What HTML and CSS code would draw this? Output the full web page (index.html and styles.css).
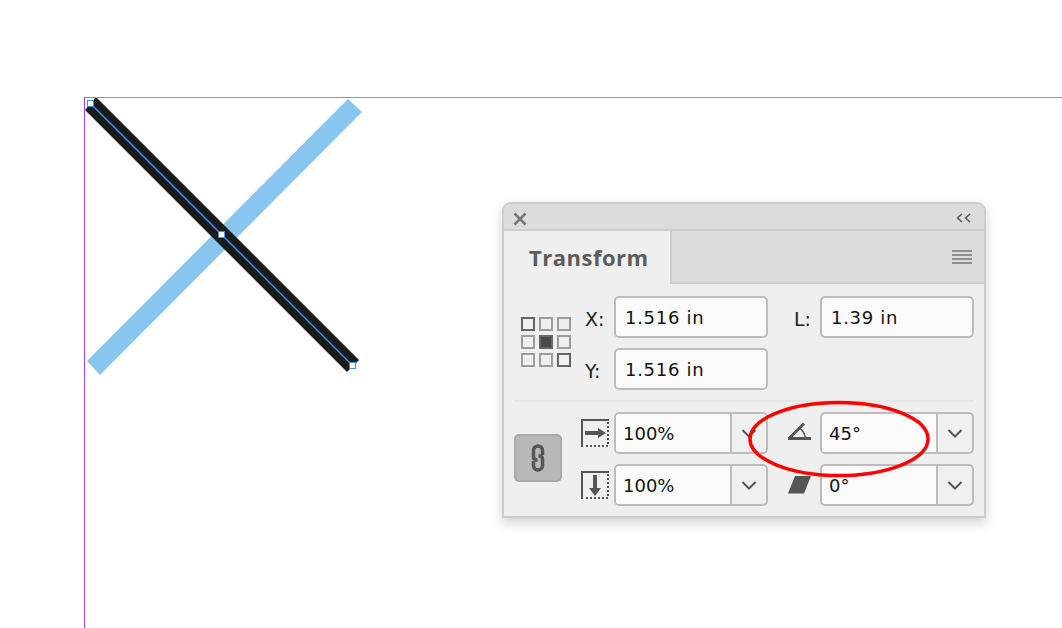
FILE: index.html
```html
<!DOCTYPE html>
<html lang="en">
<head>
  <meta charset="UTF-8">
  <meta name="viewport" content="width=device-width, initial-scale=1.0">
  <title>Transform panel</title>
  <link rel="stylesheet" href="styles.css">
</head>
<body>
  <!-- Page canvas: guides, the two strokes and their handles -->
  <svg class="canvas" width="1062" height="628" viewBox="0 0 1062 628">
    <polygon points="348,99 362,112 100,375 87,361" fill="#88c6f0"/>
    <polygon points="96,97 359,360 347,372 85,110" fill="#1a1a1a"/>
    <line x1="90" y1="103" x2="352" y2="365" stroke="#3f8fef" stroke-width="1.5"/>
    <line x1="84" y1="97.5" x2="1062" y2="97.5" stroke="#c86be8" stroke-width="1"/>
    <line x1="84.5" y1="97" x2="84.5" y2="628" stroke="#a142f4" stroke-width="1"/>
    <rect class="handle" x="87.5" y="100.5" width="6" height="6"/>
    <rect class="handle" x="218.5" y="231.5" width="6" height="6"/>
    <rect class="handle" x="349.5" y="362.5" width="6" height="6"/>
  </svg>

  <div class="panel">
    <div class="titlebar">
      <svg class="close-icon" width="14" height="14" viewBox="0 0 14 14">
        <path d="M1.5 1.5l11 11M12.5 1.5l-11 11"/>
      </svg>
      <svg class="collapse-icon" width="16" height="10" viewBox="0 0 16 10">
        <path d="M6 1L1.500 5 6 9M14 1L9.500 5 14 9"/>
      </svg>
    </div>

    <div class="tabs">
      <div class="tab">Transform</div>
      <div class="tab-strip">
        <svg class="menu-icon" width="20" height="14" viewBox="0 0 20 14">
          <path d="M0 1h20M0 5h20M0 9h20M0 13h20"/>
        </svg>
      </div>
    </div>

    <div class="fields">
      <div class="refpoint">
        <span class="dark"></span><span></span><span></span>
        <span></span><span class="center"></span><span></span>
        <span></span><span></span><span class="dark"></span>
      </div>
      <span class="label">X:</span>
      <div class="field unit">1.516 in</div>
      <span class="label label-l">L:</span>
      <div class="field unit">1.39 in</div>
      <span class="label">Y:</span>
      <div class="field unit">1.516 in</div>
    </div>

    <div class="divider"></div>

    <div class="fields lower">
      <div class="link-cell">
        <button class="link-button">
          <svg width="14" height="28" viewBox="0 0 14 28">
            <path d="M11.500 11V6.500a4.500 4.500 0 0 0-9 0V13q0 3 4 3M2.500 17v4.500a4.500 4.500 0 0 0 9 0V15q0-3-4-3"/>
          </svg>
        </button>
      </div>

      <svg class="icon" width="28" height="28" viewBox="0 0 28 28">
        <path class="solid" d="M1 28V1H28"/>
        <path class="dots" d="M27 3V27H3"/>
        <path class="fill" d="M4 12H17V9L25 14L17 19V16H4Z"/>
      </svg>
      <div class="combo">
        <div class="combo-value">100%</div>
        <div class="combo-arrow"><svg class="chevron" width="16" height="9" viewBox="0 0 16 9"><path d="M1.500 1L8 7.500 14.500 1"/></svg></div>
      </div>
      <svg class="icon icon-angle" width="24" height="22" viewBox="0 0 24 22">
        <path class="fill" d="M1 15H24V18H1Z"/>
        <path class="heavy" d="M2 16.500L17 1.500"/>
        <path class="thin" d="M12 6Q17.500 9 18 15"/>
      </svg>
      <div class="combo">
        <div class="combo-value">45°</div>
        <div class="combo-arrow"><svg class="chevron" width="16" height="9" viewBox="0 0 16 9"><path d="M1.500 1L8 7.500 14.500 1"/></svg></div>
      </div>

      <svg class="icon" width="28" height="28" viewBox="0 0 28 28">
        <path class="solid" d="M1 28V1H28"/>
        <path class="dots" d="M27 3V27H3"/>
        <path class="fill" d="M12 4H16V17H20L14 25L8 17H12Z"/>
      </svg>
      <div class="combo">
        <div class="combo-value">100%</div>
        <div class="combo-arrow"><svg class="chevron" width="16" height="9" viewBox="0 0 16 9"><path d="M1.500 1L8 7.500 14.500 1"/></svg></div>
      </div>
      <svg class="icon icon-shear" width="24" height="18" viewBox="0 0 24 18">
        <path class="fill" d="M7 0H23L16 17.500H0Z"/>
      </svg>
      <div class="combo">
        <div class="combo-value">0°</div>
        <div class="combo-arrow"><svg class="chevron" width="16" height="9" viewBox="0 0 16 9"><path d="M1.500 1L8 7.500 14.500 1"/></svg></div>
      </div>
    </div>
  </div>

  <!-- Red annotation drawn over the rotate field -->
  <svg class="annotation" width="190" height="84" viewBox="0 0 190 84">
    <ellipse cx="95" cy="42" rx="89" ry="36.500"/>
  </svg>
</body>
</html>
```

FILE: styles.css
```css
body {
  margin: 0;
  width: 1062px;
  height: 628px;
  overflow: hidden;
  position: relative;
  background: #fff;
  font-family: "DejaVu Sans", sans-serif;
  color: #111;
}

.canvas {
  position: absolute;
  top: 0;
  left: 0;
}

.handle {
  fill: #fff;
  stroke: #3f8fef;
  stroke-width: 1;
}

.annotation {
  position: absolute;
  left: 744px;
  top: 397px;
}

.annotation ellipse {
  fill: none;
  stroke: #ff0000;
  stroke-width: 3.5;
}

/* Floating panel */
.panel {
  position: absolute;
  left: 502px;
  top: 202px;
  width: 484px;
  height: 316px;
  box-sizing: border-box;
  border: 2px solid #cdcdcd;
  border-radius: 9px 9px 0 0;
  background: #efefef;
  box-shadow: 0 5px 12px rgba(0, 0, 0, 0.18);
}

.titlebar {
  display: flex;
  align-items: center;
  justify-content: space-between;
  height: 25px;
  padding: 0 12px 0 9px;
  background: #dcdcdc;
  border-bottom: 2px solid #cdcdcd;
  border-radius: 7px 7px 0 0;
}

.close-icon {
  margin-top: 4px;
}

.close-icon path {
  fill: none;
  stroke: #777;
  stroke-width: 2.5;
}

.collapse-icon {
  margin-top: 2px;
}

.collapse-icon path {
  fill: none;
  stroke: #555;
  stroke-width: 1.5;
}

.tabs {
  display: flex;
  height: 53px;
}

.tab {
  width: 168px;
  box-sizing: border-box;
  padding: 12px 0 0 25px;
  border-right: 2px solid #cdcdcd;
  font-family: "Open Sans", sans-serif;
  font-size: 22px;
  line-height: 28px;
  font-weight: 700;
  letter-spacing: 0.5px;
  color: #5c5c5c;
}

.tab-strip {
  flex: 1;
  display: flex;
  align-items: center;
  justify-content: flex-end;
  padding-right: 12px;
  background: #dbdbdb;
  border-bottom: 2px solid #cdcdcd;
}

.menu-icon path {
  stroke: #777;
  stroke-width: 1.6;
}

/* Shared five column grid for both field blocks */
.fields {
  display: grid;
  grid-template-columns: 67px 33px 154px 52px 154px;
  grid-auto-rows: 42px;
  row-gap: 10px;
  padding: 12px 0 0 10px;
  align-items: center;
}

.fields.lower {
  padding-top: 10px;
}

.label {
  font-size: 19px;
  color: #222;
  padding: 3px 0 0 4px;
}

.label-l {
  padding-left: 26px;
}

.field {
  height: 42px;
  box-sizing: border-box;
  border: 2px solid #bcbcbc;
  border-radius: 5px;
  background: #fbfbfb;
  padding-left: 9px;
  font-size: 18px;
  line-height: 40px;
}

.field.unit {
  letter-spacing: 0.7px;
}

.refpoint {
  grid-row: span 2;
  align-self: start;
  display: grid;
  grid-template-columns: repeat(3, 14px);
  grid-auto-rows: 14px;
  gap: 4px;
  margin: 21px 0 0 7px;
}

.refpoint span {
  box-sizing: border-box;
  border: 2px solid #9c9c9c;
}

.refpoint .dark {
  border-color: #666;
}

.refpoint .center {
  border-color: #666;
  background: #4a4a4a;
}

.divider {
  height: 2px;
  margin: 10px 10px 0;
  background: #e6e6e6;
}

.link-cell {
  grid-row: span 2;
  align-self: start;
}

.link-button {
  display: flex;
  align-items: center;
  justify-content: center;
  width: 48px;
  height: 48px;
  padding: 0;
  margin-top: 22px;
  border: 2px solid #a9a9a9;
  border-radius: 5px;
  background: #b8b8b8;
}

.link-button path {
  fill: none;
  stroke: #555;
  stroke-width: 3.5;
}

.icon .solid {
  fill: none;
  stroke: #555;
  stroke-width: 2;
}

.icon .dots {
  fill: none;
  stroke: #555;
  stroke-width: 2;
  stroke-dasharray: 2 2;
}

.icon .fill {
  fill: #555;
}

.icon .heavy {
  fill: none;
  stroke: #555;
  stroke-width: 3;
}

.icon .thin {
  fill: none;
  stroke: #555;
  stroke-width: 1.5;
}

.icon-angle {
  margin-left: 19px;
}

.icon-shear {
  margin-left: 20px;
}

.combo {
  display: flex;
  height: 42px;
  box-sizing: border-box;
  border: 2px solid #bcbcbc;
  border-radius: 5px;
  background: #f0f0f0;
}

.combo-value {
  width: 116px;
  padding-left: 7px;
  box-sizing: border-box;
  background: #fbfbfb;
  border-right: 2px solid #bcbcbc;
  border-radius: 3px 0 0 3px;
  font-size: 18px;
  line-height: 40px;
}

.combo-arrow {
  flex: 1;
  display: flex;
  align-items: center;
  justify-content: center;
}

.chevron path {
  fill: none;
  stroke: #555;
  stroke-width: 2;
}
```
